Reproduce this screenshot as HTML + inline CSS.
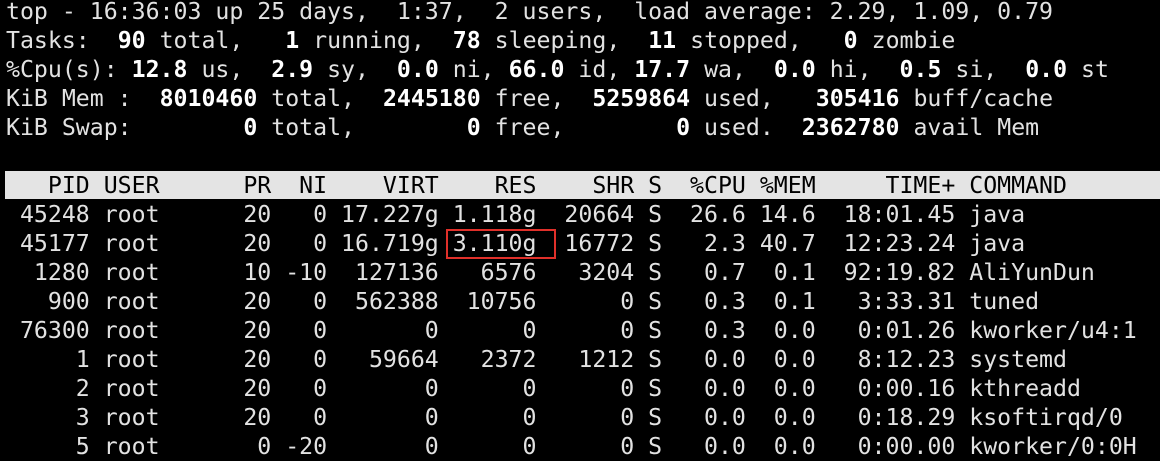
<!DOCTYPE html>
<html><head><meta charset="utf-8"><style>
html,body{margin:0;padding:0;background:#000;width:1160px;height:457px;overflow:hidden}
pre{margin:0;position:absolute;left:6px;top:-3px;font-family:"DejaVu Sans Mono","Liberation Mono",monospace;font-size:23.2px;line-height:29px;color:#e2e2e2;white-space:pre}
b{color:#fff;font-weight:bold}
.hdr{position:absolute;left:5px;top:171px;width:1155px;height:28px;background:#e4e4e4}
.hl{color:#000}
.box{position:absolute;left:446px;top:229px;width:106px;height:26px;border:2px solid #e0302a}
</style></head><body>
<div class="hdr"></div>
<pre>top - 16:36:03 up 25 days,  1:37,  2 users,  load average: 2.29, 1.09, 0.79
Tasks: <b> 90</b> total, <b>  1</b> running, <b> 78</b> sleeping, <b> 11</b> stopped, <b>  0</b> zombie
%Cpu(s): <b>12.8</b> us, <b> 2.9</b> sy, <b> 0.0</b> ni, <b>66.0</b> id, <b>17.7</b> wa, <b> 0.0</b> hi, <b> 0.5</b> si, <b> 0.0</b> st
KiB Mem : <b> 8010460</b> total, <b> 2445180</b> free, <b> 5259864</b> used, <b>  305416</b> buff/cache
KiB Swap: <b>       0</b> total, <b>       0</b> free, <b>       0</b> used. <b> 2362780</b> avail Mem

<span class="hl">   PID USER      PR  NI    VIRT    RES    SHR S  %CPU %MEM     TIME+ COMMAND</span>
 45248 root      20   0 17.227g 1.118g  20664 S  26.6 14.6  18:01.45 java
 45177 root      20   0 16.719g 3.110g  16772 S   2.3 40.7  12:23.24 java
  1280 root      10 -10  127136   6576   3204 S   0.7  0.1  92:19.82 AliYunDun
   900 root      20   0  562388  10756      0 S   0.3  0.1   3:33.31 tuned
 76300 root      20   0       0      0      0 S   0.3  0.0   0:01.26 kworker/u4:1
     1 root      20   0   59664   2372   1212 S   0.0  0.0   8:12.23 systemd
     2 root      20   0       0      0      0 S   0.0  0.0   0:00.16 kthreadd
     3 root      20   0       0      0      0 S   0.0  0.0   0:18.29 ksoftirqd/0
     5 root       0 -20       0      0      0 S   0.0  0.0   0:00.00 kworker/0:0H</pre>
<div class="box"></div>
</body></html>
